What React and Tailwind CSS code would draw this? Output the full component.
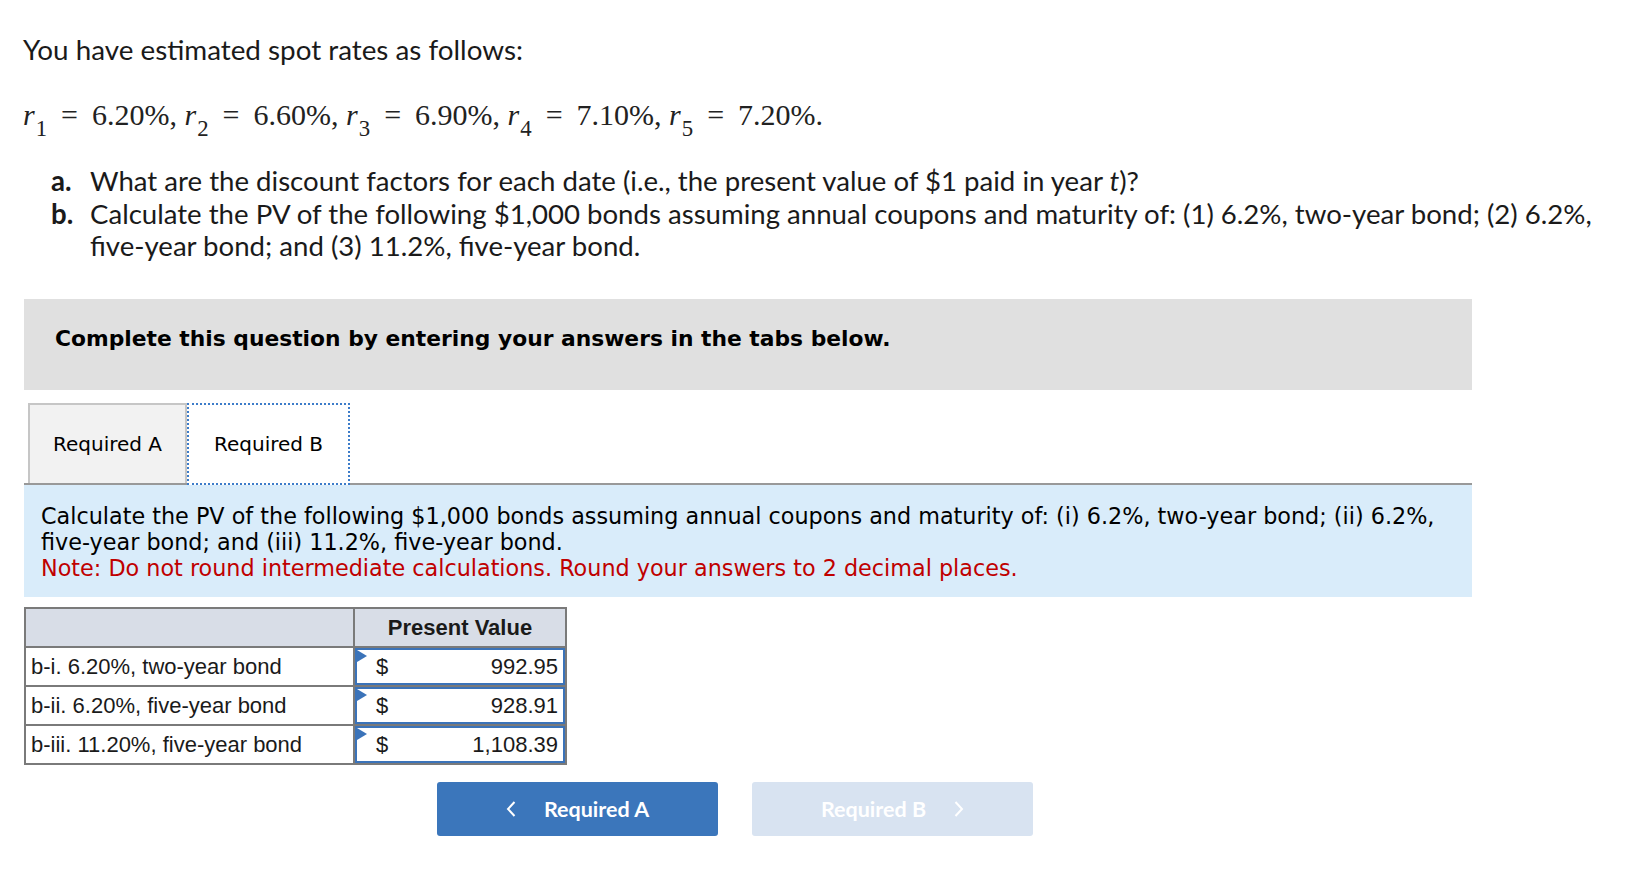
const rows = [
  { label: 'b-i. 6.20%, two-year bond', value: '992.95' },
  { label: 'b-ii. 6.20%, five-year bond', value: '928.91' },
  { label: 'b-iii. 11.20%, five-year bond', value: '1,108.39' },
];

const Sub = ({ children }) => <sub className="ml-[1px] align-[-0.22em] text-[0.76em] not-italic">{children}</sub>;

const Rate = ({ n, v, last }) => (
  <span>
    <i>r</i>
    <Sub>{n}</Sub>
    <span className="mx-[14px]">=</span>
    {v}
    {last ? '.' : ', '}
  </span>
);

export default function App() {
  return (
    <div className="min-h-screen bg-white pl-[23px] pt-[34px] pb-10 text-[#1a1a1a]">
      <p className="font-['Lato',sans-serif] text-[27.8px] leading-[32px]">You have estimated spot rates as follows:</p>

      <p className="mt-[29px] font-['Liberation_Serif',serif] text-[30px] leading-[40px] text-[#222]">
        <Rate n="1" v="6.20%" />
        <Rate n="2" v="6.60%" />
        <Rate n="3" v="6.90%" />
        <Rate n="4" v="7.10%" />
        <Rate n="5" v="7.20%" last />
      </p>

      <ol className="mt-[30px] pl-[28px] font-['Lato',sans-serif] text-[27.6px] leading-[32.5px]">
        <li className="flex">
          <span className="w-[39px] shrink-0 font-bold">a.</span>
          <span>What are the discount factors for each date (i.e., the present value of $1 paid in year <i>t</i>)?</span>
        </li>
        <li className="flex">
          <span className="w-[39px] shrink-0 font-bold">b.</span>
          <span className="max-w-[1530px]">
            Calculate the PV of the following $1,000 bonds assuming annual coupons and maturity of: (1) 6.2%, two-year bond; (2) 6.2%, five-year bond; and (3) 11.2%, five-year bond.
          </span>
        </li>
      </ol>

      <div className="ml-[1px] mt-[36px] h-[91px] w-[1448px] bg-[#e0e0e0] pl-[31px] pt-[26px]">
        <p className="font-['DejaVu_Sans',sans-serif] text-[21.8px] font-bold leading-[28px] text-black">
          Complete this question by entering your answers in the tabs below.
        </p>
      </div>

      <div className="ml-[1px] w-[1448px] font-['DejaVu_Sans',sans-serif] text-black">
        <div className="mt-[13px] flex border-b-2 border-[#999] pl-[4px] text-[20px]">
          <div className="flex h-[80px] w-[159px] items-center justify-center border-2 border-b-0 border-[#c6c6c6] bg-[#f2f2f2]">
            Required A
          </div>
          <div className="-mb-[2px] flex h-[82px] w-[163px] items-center justify-center border-2 border-dotted border-[#3d7cc9] bg-white">
            Required B
          </div>
        </div>

        <div className="bg-[#d9ecfa] pb-[15px] pl-[17px] pr-[30px] pt-[18px] text-[22.3px] leading-[26.4px]">
          <p>
            Calculate the PV of the following $1,000 bonds assuming annual coupons and maturity of: (i) 6.2%, two-year bond; (ii) 6.2%, five-year bond; and (iii) 11.2%, five-year bond.
          </p>
          <p className="text-[#c00000]">Note: Do not round intermediate calculations. Round your answers to 2 decimal places.</p>
        </div>
      </div>

      <table className="ml-[1px] mt-[10px] w-[543px] border-collapse border-2 border-[#7a7a7a] font-['Liberation_Sans',sans-serif] text-[22px] text-[#1a1a1a]">
        <thead>
          <tr className="h-[39px] bg-[#d8dde7]">
            <th className="w-[329px] border-2 border-[#7a7a7a]"></th>
            <th className="border-2 border-[#7a7a7a] font-bold">Present Value</th>
          </tr>
        </thead>
        <tbody>
          {rows.map((r) => (
            <tr key={r.label} className="h-[39px]">
              <td className="border-2 border-[#7a7a7a] pl-[5px]">{r.label}</td>
              <td className="border-2 border-[#7a7a7a] p-0">
                <div className="relative flex h-[37px] items-center justify-between border-2 border-[#3b73b9] bg-white pl-[19px] pr-[5px]">
                  <svg className="absolute left-0 top-0" width="10" height="12" viewBox="0 0 10 12">
                    <polygon points="0,0 10,6 0,12" fill="#3b73b9" />
                  </svg>
                  <span>$</span>
                  <span>{r.value}</span>
                </div>
              </td>
            </tr>
          ))}
        </tbody>
      </table>

      <div className="ml-[414px] mt-[17px] flex gap-[34px] font-['Lato',sans-serif] text-[21.5px] font-bold text-white">
        <button className="flex h-[54px] w-[281px] items-center justify-center gap-[28px] rounded-[3px] bg-[#3b76bb]">
          <svg width="10" height="18" viewBox="0 0 10 18" fill="none">
            <path d="M8.5 2 L2 9 L8.5 16" stroke="white" strokeWidth="2" />
          </svg>
          <span>Required A</span>
        </button>
        <button className="flex h-[54px] w-[281px] items-center justify-center gap-[28px] rounded-[3px] bg-[#d8e3f1]">
          <span>Required B</span>
          <svg width="10" height="18" viewBox="0 0 10 18" fill="none">
            <path d="M1.5 2 L8 9 L1.5 16" stroke="white" strokeWidth="2" />
          </svg>
        </button>
      </div>
    </div>
  );
}
